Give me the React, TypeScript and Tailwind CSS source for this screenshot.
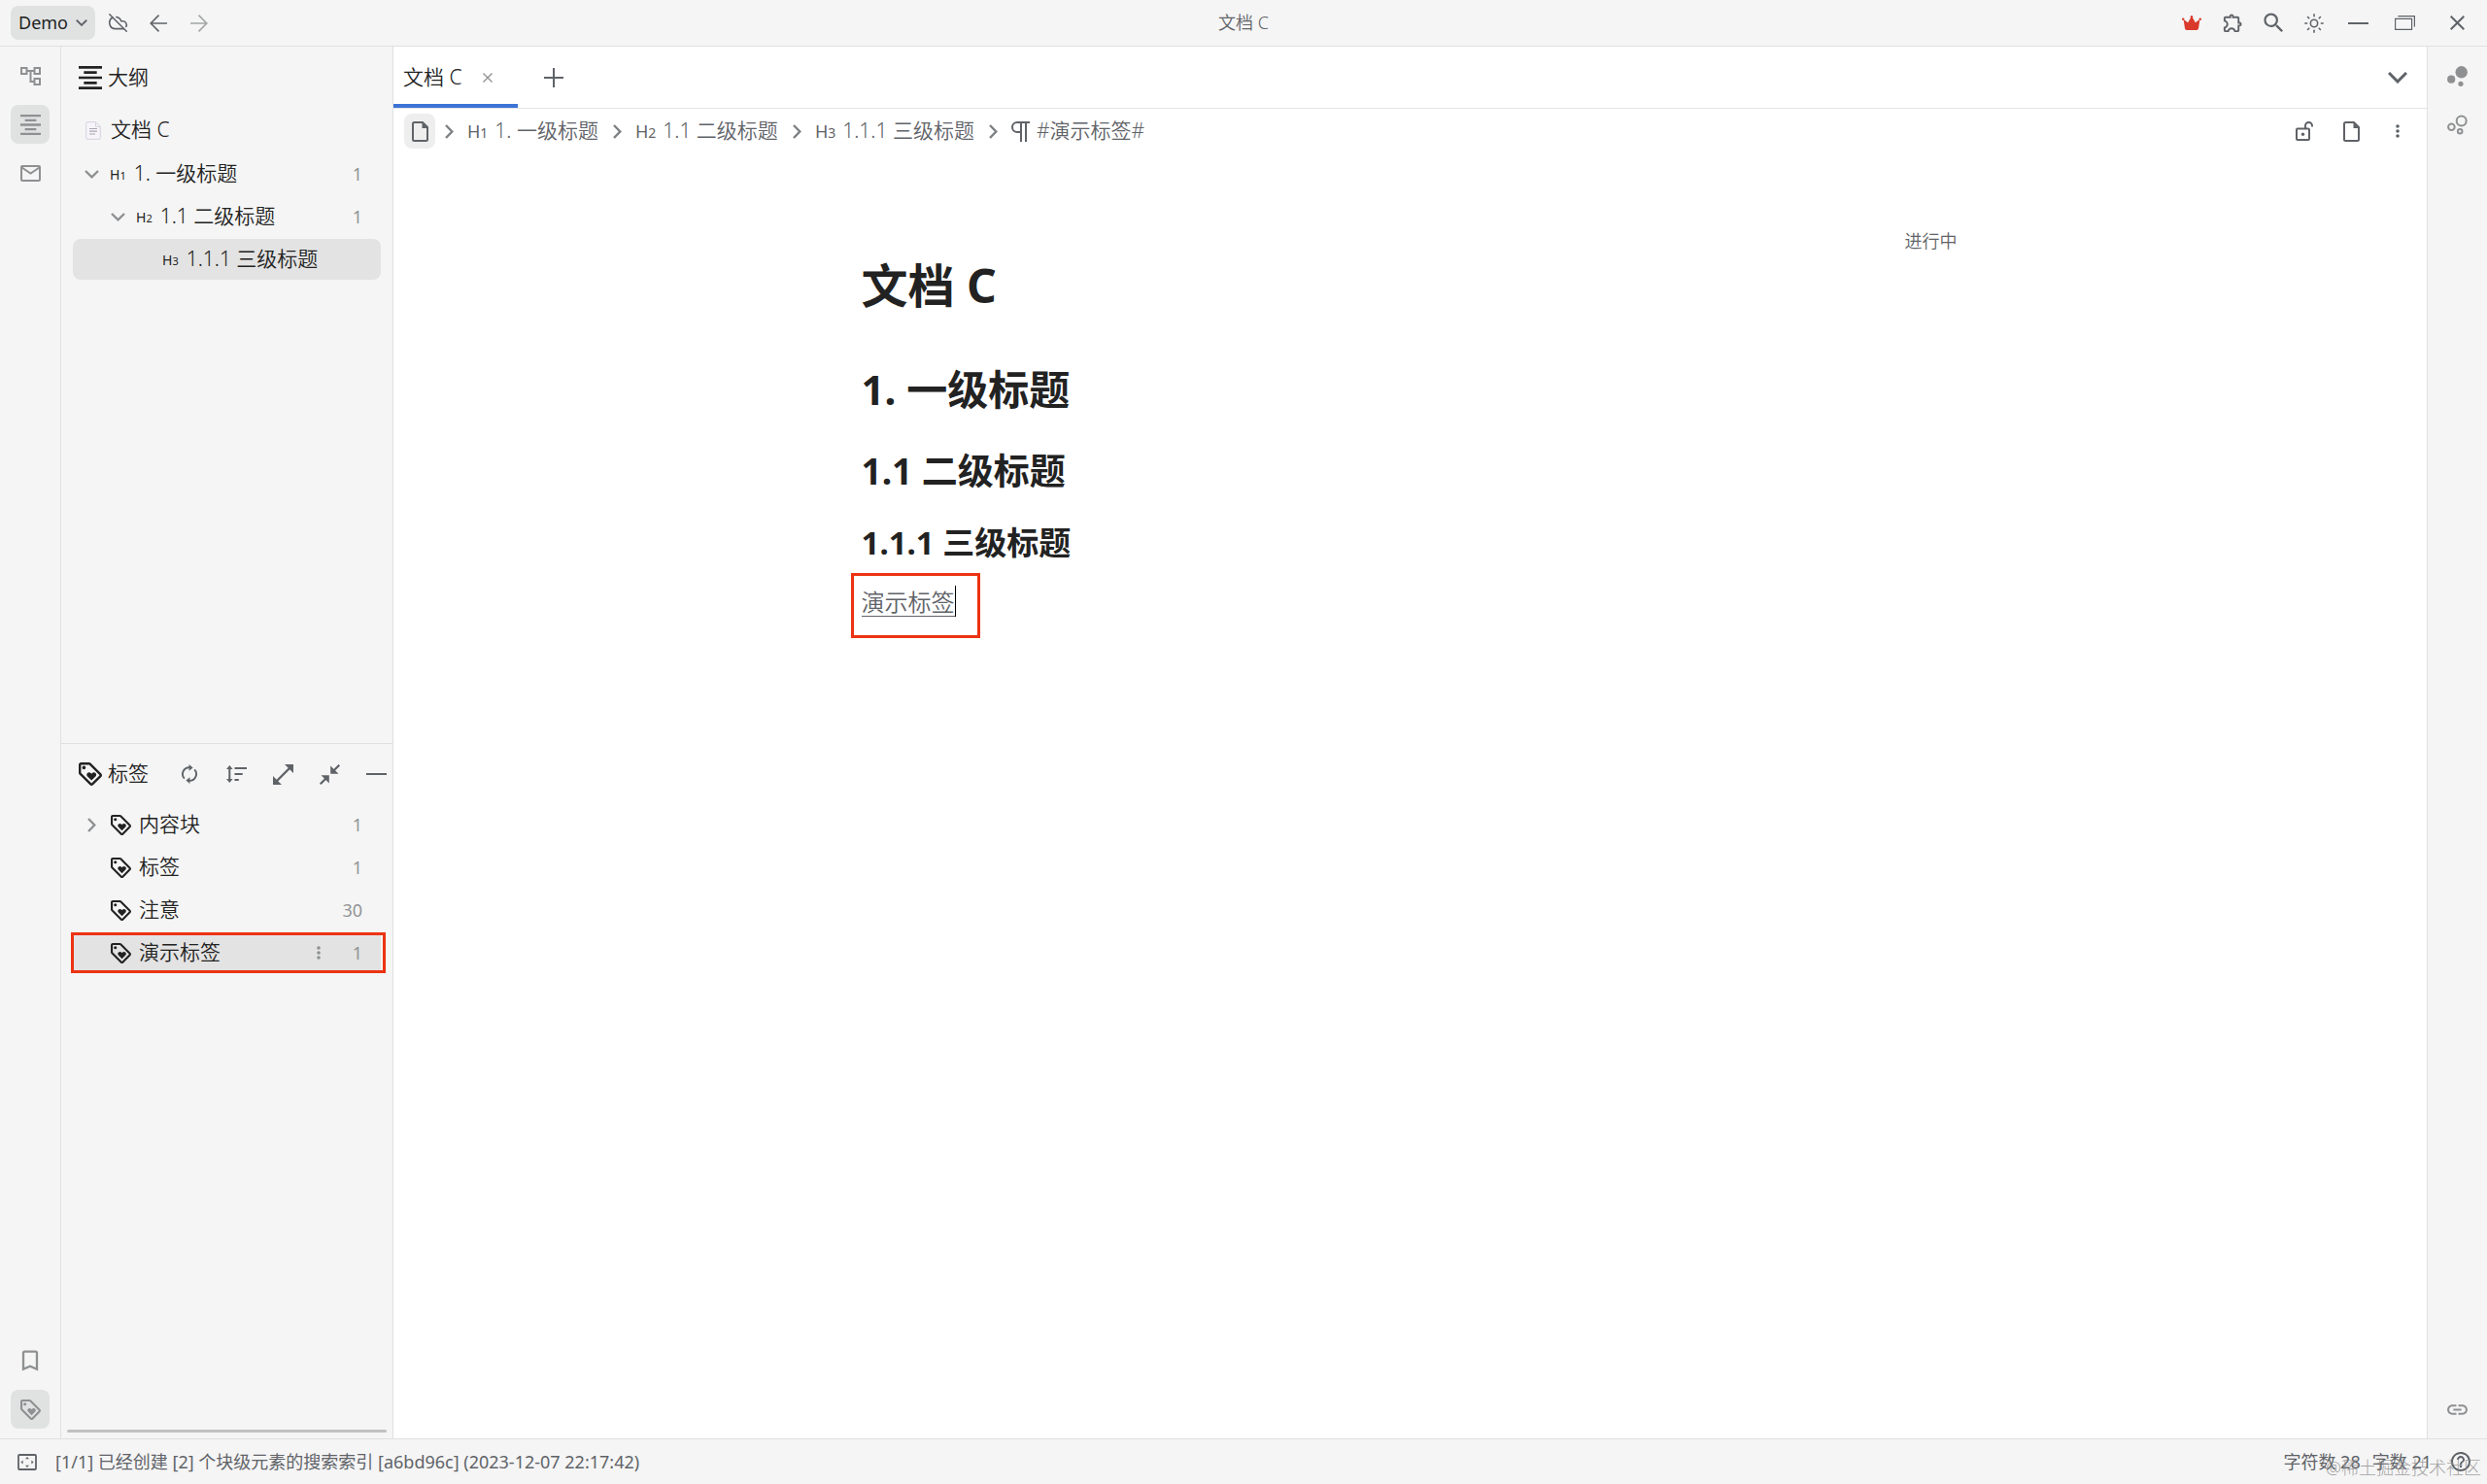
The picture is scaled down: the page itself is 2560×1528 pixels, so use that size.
import { MdBookmarkBorder, MdHelpOutline, MdLink, MdOutlineExtension, MdSearch } from "react-icons/md";
import { CloudOff, Sun } from "lucide-react";
import clsx from "clsx";

type IconProps = {
  className?: string;
};

const AlignIcon: React.FC<IconProps> = ({ className }) => (
  <svg viewBox="0 0 18 18" className={className} fill="currentColor">
    <path d="M0 0h18v2H0zM4 4h10v2H4zM0 8h18v2H0zM4 12h10v2H4zM0 16h18v2H0z" />
  </svg>
);

const TagIcon: React.FC<IconProps> = ({ className }) => (
  <svg viewBox="2 2 20 20" className={className} fill="currentColor">
    <path d="M21.41 11.58l-9-9C12.05 2.22 11.55 2 11 2H4c-1.1 0-2 .9-2 2v7c0 .55.22 1.05.59 1.42l9 9c.36.36.86.58 1.41.58s1.05-.22 1.41-.59l7-7c.37-.36.59-.86.59-1.41s-.23-1.06-.59-1.42zM13 20.01L4 11V4h7v-.01l9 9-7 7.02z" />
    <circle cx="6.5" cy="6.5" r="1.5" />
    <path d="M8.9 12.55c0 .57.23 1.07.6 1.45l3.5 3.5 3.5-3.5c.37-.37.6-.89.6-1.45 0-1.13-.92-2.05-2.05-2.05-.57 0-1.08.23-1.45.6l-.6.6-.6-.59c-.37-.38-.89-.61-1.45-.61-1.13 0-2.05.92-2.05 2.05z" />
  </svg>
);

const TreeIcon: React.FC<IconProps> = ({ className }) => (
  <svg viewBox="0 0 21 21" className={className} fill="none" stroke="currentColor" strokeWidth="2">
    <path d="M1 2h5.5v6H1zM14.5 2H20v6h-5.5zM14.5 13H20v6h-5.5zM6.5 5h8M10.5 5v11h4" />
  </svg>
);

const MailIcon: React.FC<IconProps> = ({ className }) => (
  <svg viewBox="0 0 21 17" className={className} fill="none" stroke="currentColor" strokeWidth="2">
    <rect x="1" y="1" width="19" height="15" rx="1" />
    <path d="M1.5 2.5l9 6 9-6" />
  </svg>
);

const FileIcon: React.FC<IconProps> = ({ className }) => (
  <svg viewBox="0 0 17 21" className={className} fill="none" stroke="currentColor" strokeWidth="2">
    <path d="M2.5 1H11l5 5v12.5a1.5 1.5 0 0 1-1.5 1.5h-12A1.5 1.5 0 0 1 1 18.5v-16A1.5 1.5 0 0 1 2.5 1z" />
    <path d="M10.5 1v6H16z" fill="currentColor" stroke="none" />
  </svg>
);

const PageIcon: React.FC<IconProps> = ({ className }) => (
  <svg viewBox="0 0 16 19" className={className} fill="none">
    <path d="M2 .7h8.5l4.8 4.8V17a1.3 1.3 0 0 1-1.3 1.3H2A1.3 1.3 0 0 1 .7 17V2A1.3 1.3 0 0 1 2 .7z" fill="#f7f5fa" stroke="#d5d2dc" />
    <path d="M10.5.7v4.8h4.8" stroke="#d5d2dc" />
    <path d="M4 7.5h8M4 10.2h8M4 13h6" stroke="#a9a6b2" strokeWidth="1.2" />
  </svg>
);

const ChevronRight: React.FC<IconProps> = ({ className }) => (
  <svg viewBox="0 0 9 15" className={className} fill="none" stroke="currentColor" strokeWidth="2.4">
    <path d="M1 1l6.3 6.5L1 14" />
  </svg>
);

const ChevronDown: React.FC<IconProps> = ({ className }) => (
  <svg viewBox="0 0 15 9" className={className} fill="none" stroke="currentColor" strokeWidth="2.4">
    <path d="M1 1l6.5 6.3L14 1" />
  </svg>
);

const DotsIcon: React.FC<IconProps> = ({ className }) => (
  <svg viewBox="0 0 4 14" className={className} fill="currentColor">
    <circle cx="2" cy="2" r="1.8" />
    <circle cx="2" cy="7" r="1.8" />
    <circle cx="2" cy="12" r="1.8" />
  </svg>
);

const ArrowIcon: React.FC<IconProps> = ({ className }) => (
  <svg viewBox="0 0 18 18" className={className} fill="none" stroke="currentColor" strokeWidth="1.6">
    <path d="M9.5.6L1.2 9l8.3 8.4M1.2 9H18" />
  </svg>
);

const CrownIcon: React.FC<IconProps> = ({ className }) => (
  <svg viewBox="0 0 20 15" className={className} fill="currentColor">
    <path d="M1.6 4l4.6 3.2L9.4 1.6h1.2l3.2 5.6L18.4 4 17 13.2A2 2 0 0 1 15 15H5a2 2 0 0 1-2-1.8z" />
    <circle cx="1.2" cy="3.8" r="1.2" />
    <circle cx="10" cy="1.2" r="1.2" />
    <circle cx="18.8" cy="3.8" r="1.2" />
  </svg>
);

const RestoreIcon: React.FC<IconProps> = ({ className }) => (
  <svg viewBox="0 0 21 15" className={className} fill="none" stroke="currentColor" strokeWidth="1.2">
    <path d="M.6 3.4h17v11H.6zM3.4.6h17v11" />
  </svg>
);

const CloseIcon: React.FC<IconProps> = ({ className }) => (
  <svg viewBox="0 0 15 15" className={className} fill="none" stroke="currentColor" strokeWidth="2">
    <path d="M.7.7l13.6 13.6M14.3.7L.7 14.3" />
  </svg>
);

const MinusIcon: React.FC<IconProps> = ({ className }) => (
  <svg viewBox="0 0 21 2" className={className} fill="currentColor">
    <path d="M0 0h21v2H0z" />
  </svg>
);

const PlusIcon: React.FC<IconProps> = ({ className }) => (
  <svg viewBox="0 0 20 20" className={className} fill="none" stroke="currentColor" strokeWidth="2">
    <path d="M10 0v20M0 10h20" />
  </svg>
);

const UnlockIcon: React.FC<IconProps> = ({ className }) => (
  <svg viewBox="0 0 18 20" className={className} fill="none" stroke="currentColor" strokeWidth="2">
    <rect x="1" y="7.5" width="13" height="11.5" rx="1" />
    <path d="M10 7.5V4.4a3.5 3.5 0 0 1 7 0v1" />
    <circle cx="7.5" cy="13.2" r="1.7" fill="currentColor" stroke="none" />
  </svg>
);

const BubblesIcon: React.FC<IconProps> = ({ className }) => (
  <svg viewBox="0 0 21 21" className={className} fill="currentColor">
    <circle cx="14.7" cy="6.3" r="6.2" />
    <circle cx="4.2" cy="13.7" r="4.1" />
    <circle cx="14" cy="18.3" r="2.6" />
  </svg>
);

const BubblesOutlineIcon: React.FC<IconProps> = ({ className }) => (
  <svg viewBox="0 0 21 21" className={className} fill="none" stroke="currentColor" strokeWidth="2">
    <circle cx="14.7" cy="6.5" r="5" />
    <circle cx="4.4" cy="12.8" r="3.3" />
    <circle cx="13.2" cy="17.3" r="2.3" />
  </svg>
);

const RefreshIcon: React.FC<IconProps> = ({ className }) => (
  <svg viewBox="0 0 16 20" className={className} fill="none" stroke="currentColor" strokeWidth="1.9">
    <path d="M2.8 14.6A6.8 6.8 0 0 1 8 3.2M13.2 5.4A6.8 6.8 0 0 1 8 16.8" />
    <path d="M7.6 0l4 3.4-4 3.4zM8.4 13.2l-4 3.4 4 3.4z" fill="currentColor" stroke="none" />
  </svg>
);

const SortIcon: React.FC<IconProps> = ({ className }) => (
  <svg viewBox="0 0 21 18" className={className} fill="none" stroke="currentColor" strokeWidth="2">
    <path d="M8.5 3H21M8.5 9h8.2M8.5 15h4.3M3.3 3v12" />
    <path d="M3.3 0l3.3 4H0zM3.3 18L0 14h6.6z" fill="currentColor" stroke="none" />
  </svg>
);

const ExpandIcon: React.FC<IconProps> = ({ className }) => (
  <svg viewBox="0 0 21 21" className={className} fill="currentColor">
    <path d="M12 0h9v9zM0 12v9h9z" />
    <path d="M4 17L17 4" stroke="currentColor" strokeWidth="2.4" />
  </svg>
);

const CollapseIcon: React.FC<IconProps> = ({ className }) => (
  <svg viewBox="0 0 21 21" className={className} fill="currentColor">
    <path d="M11.2 1.5v8.3h8.3zM1.5 11.2h8.3v8.3z" />
    <path d="M13 8l7.3-7.3M8 13L.7 20.3" stroke="currentColor" strokeWidth="2.2" />
  </svg>
);

const PilcrowIcon: React.FC<IconProps> = ({ className }) => (
  <svg viewBox="0 0 19 21" className={className} fill="none" stroke="currentColor" strokeWidth="2">
    <path d="M19 1H6a4.8 4.8 0 0 0 0 10h3M10 1v20M15 1v20" />
  </svg>
);

const DockIcon: React.FC<IconProps> = ({ className }) => (
  <svg viewBox="0 0 20 17" className={className} fill="none" stroke="currentColor" strokeWidth="1.8">
    <rect x="1" y="1" width="18" height="15" rx="1" />
    <path d="M10 3l2 2.2H8zM10 14l2-2.2H8zM3.4 8.5l2.2-2v4zM16.6 8.5l-2.2-2v4z" fill="currentColor" stroke="none" />
  </svg>
);

type ButtonProps = {
  label: string;
  className?: string;
  children: React.ReactNode;
};

const IconButton: React.FC<ButtonProps> = ({ label, className, children }) => (
  <button aria-label={label} className={clsx("flex shrink-0 items-center justify-center", className)}>
    {children}
  </button>
);

const DockButton: React.FC<ButtonProps & { active?: boolean }> = ({ label, active, children }) => (
  <button
    aria-label={label}
    className={clsx("flex size-10 items-center justify-center rounded-lg text-[#8e9092]", active && "bg-[#e0e2e2]")}
  >
    {children}
  </button>
);

const Level: React.FC<{ n: number; small?: boolean }> = ({ n, small }) => (
  <span className={clsx("flex items-baseline font-normal", small ? "text-[14px]" : "text-[18px]")}>
    H<span className={small ? "text-[11px]" : "text-[14px]"}>{n}</span>
  </span>
);

const outline = [
  { level: 1, text: "1. 一级标题", count: 1, indent: "pl-3" },
  { level: 2, text: "1.1 二级标题", count: 1, indent: "pl-[39px]" },
  { level: 3, text: "1.1.1 三级标题", count: 0, indent: "pl-[66px]" },
];

const tags = [
  { text: "内容块", count: 1, open: true, active: false },
  { text: "标签", count: 1, open: false, active: false },
  { text: "注意", count: 30, open: false, active: false },
  { text: "演示标签", count: 1, open: false, active: true },
];

const crumbs = [
  { level: 1, text: "1. 一级标题" },
  { level: 2, text: "1.1 二级标题" },
  { level: 3, text: "1.1.1 三级标题" },
];

const TopBar = () => (
  <header className="grid h-12 shrink-0 grid-cols-[1fr_auto_1fr] items-center border-b border-[#dfe0e1] text-[18px] text-[#5f6368]">
    <div className="flex h-full items-center pl-[11px]">
      <button className="mr-[2px] flex h-[35px] items-center gap-2 rounded-lg bg-[#e0e2e2] px-2 font-normal text-[#222]">
        Demo
        <ChevronDown className="w-3 text-[#5f6368]" />
      </button>
      <IconButton label="云端同步" className="h-full w-[42px]">
        <CloudOff size={21} strokeWidth={1.8} />
      </IconButton>
      <IconButton label="后退" className="h-full w-[42px]">
        <ArrowIcon className="w-[18px]" />
      </IconButton>
      <IconButton label="前进" className="h-full w-[42px] text-[#a3a5a7]">
        <ArrowIcon className="w-[18px] rotate-180" />
      </IconButton>
    </div>
    <div>文档 C</div>
    <div className="flex h-full justify-end">
      <IconButton label="会员" className="w-[42px] text-[#d93a2b]">
        <CrownIcon className="w-5" />
      </IconButton>
      <IconButton label="插件" className="w-[42px]">
        <MdOutlineExtension size={23} />
      </IconButton>
      <IconButton label="搜索" className="w-[42px]">
        <MdSearch size={27} />
      </IconButton>
      <IconButton label="外观" className="w-[42px]">
        <Sun size={22} strokeWidth={1.7} />
      </IconButton>
      <IconButton label="最小化" className="w-12">
        <MinusIcon className="w-[21px]" />
      </IconButton>
      <IconButton label="还原" className="w-12">
        <RestoreIcon className="w-[21px]" />
      </IconButton>
      <IconButton label="关闭" className="w-[61px]">
        <CloseIcon className="w-[15px]" />
      </IconButton>
    </div>
  </header>
);

const LeftDock = () => (
  <nav className="flex w-[63px] shrink-0 flex-col items-center gap-[10px] border-r border-[#dfe0e1] py-[10px]">
    <DockButton label="文档树">
      <TreeIcon className="w-[21px]" />
    </DockButton>
    <DockButton label="大纲" active>
      <AlignIcon className="w-[21px]" />
    </DockButton>
    <DockButton label="收集箱">
      <MailIcon className="w-[21px]" />
    </DockButton>
    <div className="flex-1" />
    <DockButton label="书签">
      <MdBookmarkBorder size={28} />
    </DockButton>
    <DockButton label="标签" active>
      <TagIcon className="w-[21px]" />
    </DockButton>
  </nav>
);

const Sidebar = () => (
  <aside className="flex w-[342px] shrink-0 flex-col border-r border-[#dfe0e1] text-[21px] text-[#222]">
    <section className="h-[717px] shrink-0">
      <h2 className="flex h-16 items-center gap-[6px] pl-[18px] font-[350]">
        <AlignIcon className="w-6" />
        大纲
      </h2>
      <ul className="flex flex-col gap-[2px] px-3">
        <li className="flex h-11 items-center gap-[10px] pl-[13px]">
          <PageIcon className="w-4" />
          文档 C
        </li>
        {outline.map((item) => (
          <li
            key={item.level}
            className={clsx("flex h-[42px] items-center rounded-lg pr-[19px]", item.indent, item.level === 3 && "bg-[#e3e3e3]")}
          >
            <span className="w-[26px] shrink-0">
              {item.count > 0 && <ChevronDown className="w-[15px] text-[#8e9092]" />}
            </span>
            <Level n={item.level} small />
            <span className="ml-2 flex-1">{item.text}</span>
            {item.count > 0 && <span className="text-[18px] font-normal text-[#929496]">{item.count}</span>}
          </li>
        ))}
      </ul>
    </section>
    <section className="flex min-h-0 flex-1 flex-col border-t border-[#dfe0e1]">
      <div className="flex h-[62px] shrink-0 items-center pl-[18px]">
        <h2 className="flex items-center gap-[6px] font-[350]">
          <TagIcon className="w-6" />
          标签
        </h2>
        <div className="ml-7 flex gap-5 text-[#5f6368]">
          <IconButton label="刷新" className="h-8 w-7">
            <RefreshIcon className="w-4" />
          </IconButton>
          <IconButton label="排序" className="h-8 w-7">
            <SortIcon className="w-[21px]" />
          </IconButton>
          <IconButton label="展开" className="h-8 w-7">
            <ExpandIcon className="w-[21px]" />
          </IconButton>
          <IconButton label="折叠" className="h-8 w-7">
            <CollapseIcon className="w-[21px]" />
          </IconButton>
          <IconButton label="最小化" className="h-8 w-7">
            <MinusIcon className="w-[21px]" />
          </IconButton>
        </div>
      </div>
      <ul className="flex flex-1 flex-col gap-[2px] px-3">
        {tags.map((tag) => (
          <li
            key={tag.text}
            className={clsx("relative flex h-[42px] items-center pr-[19px] pl-[15px]", tag.active && "bg-[#e3e3e3]")}
          >
            <span className="w-6 shrink-0">{tag.open && <ChevronRight className="w-[9px] text-[#8e9092]" />}</span>
            <TagIcon className="w-[21px]" />
            <span className="ml-2 flex-1">{tag.text}</span>
            {tag.active && <DotsIcon className="mr-[33px] h-[14px] text-[#8e9092]" />}
            <span className="text-[18px] font-normal text-[#929496]">{tag.count}</span>
            {tag.active && <span className="absolute inset-y-0 -right-[5px] -left-[2px] border-3 border-[#ec3313]" />}
          </li>
        ))}
      </ul>
      <div className="mx-[6px] mb-[6px] h-[3px] rounded-full bg-[#c1c1c1]" />
    </section>
  </aside>
);

const Editor = () => (
  <main className="flex min-w-0 flex-1 flex-col bg-white text-[#222]">
    <div className="flex h-16 shrink-0 items-stretch border-b border-[#e3e4e5] text-[21px]">
      <div className="flex w-32 items-center justify-between border-b-4 border-[#3c73d6] pt-1 pr-[26px] pl-[10px]">
        <span>文档 C</span>
        <IconButton label="关闭页签" className="text-[#8e9092]">
          <CloseIcon className="w-[10px]" />
        </IconButton>
      </div>
      <IconButton label="新建" className="w-[74px] text-[#5f6368]">
        <PlusIcon className="w-5" />
      </IconButton>
      <IconButton label="更多页签" className="mr-[6px] ml-auto w-12 text-[#5f6368]">
        <svg viewBox="0 0 20 12" className="w-5" fill="none" stroke="currentColor" strokeWidth="3">
          <path d="M1 1l9 9 9-9" />
        </svg>
      </IconButton>
    </div>
    <div className="flex h-[46px] shrink-0 items-center pl-[11px] text-[21px] text-[#5f6368]">
      <IconButton label="文档" className="h-9 w-8 rounded-lg bg-[#eeeeee]">
        <FileIcon className="w-[17px]" />
      </IconButton>
      {crumbs.map((crumb) => (
        <div key={crumb.level} className="flex items-center">
          <ChevronRight className={clsx("mr-[14px] w-[9px] text-[#7d8083]", crumb.level === 1 ? "ml-[10px]" : "ml-[15px]")} />
          <a href="#" className="flex items-center gap-[7px]">
            <Level n={crumb.level} />
            {crumb.text}
          </a>
        </div>
      ))}
      <ChevronRight className="mr-[14px] ml-[15px] w-[9px] text-[#7d8083]" />
      <a href="#" className="flex items-center gap-[7px]">
        <PilcrowIcon className="w-[19px]" />
        #演示标签#
      </a>
      <div className="mr-[6px] ml-auto flex">
        <IconButton label="解锁" className="h-9 w-12">
          <UnlockIcon className="w-[18px]" />
        </IconButton>
        <IconButton label="打开文档" className="h-9 w-12">
          <FileIcon className="w-[17px]" />
        </IconButton>
        <IconButton label="更多" className="h-9 w-12">
          <DotsIcon className="h-[14px]" />
        </IconButton>
      </div>
    </div>
    <article className="mx-auto w-full max-w-[1130px] pt-[76px]">
      <div className="pr-[2px] text-right text-[18px] leading-7 text-[#5f6368]">进行中</div>
      <h1 className="text-[48px] leading-[64px] font-bold">文档 C</h1>
      <h2 className="mt-[47px] text-[42px] leading-[56px] font-bold">1. 一级标题</h2>
      <h3 className="mt-8 text-[37px] leading-[48px] font-bold">1.1 二级标题</h3>
      <h4 className="mt-7 text-[33px] leading-[44px] font-bold">1.1.1 三级标题</h4>
      <p className="relative mt-[22px] flex w-fit text-[24px] text-[#5f6368]">
        <span className="h-8 border-b border-[#5f6368] leading-[34px]">演示标签</span>
        <span className="h-8 w-px bg-black" />
        <span className="absolute -top-[13px] -right-[25px] h-[67px] w-[133px] border-3 border-[#ec3313]" />
      </p>
    </article>
  </main>
);

const RightDock = () => (
  <nav className="flex w-[62px] shrink-0 flex-col items-center gap-[10px] border-l border-[#dfe0e1] py-[10px]">
    <DockButton label="关系图">
      <BubblesIcon className="w-[21px]" />
    </DockButton>
    <DockButton label="全局关系图">
      <BubblesOutlineIcon className="w-[21px]" />
    </DockButton>
    <div className="flex-1" />
    <DockButton label="反向链接">
      <MdLink size={25} />
    </DockButton>
  </nav>
);

const StatusBar = () => (
  <footer className="relative flex h-[47px] shrink-0 items-center border-t border-[#dfe0e1] pr-[15px] pl-[18px] text-[18px] font-normal text-[#5f6368]">
    <IconButton label="停靠栏" className="mr-[19px]">
      <DockIcon className="w-5" />
    </IconButton>
    <span>[1/1] 已经创建 [2] 个块级元素的搜索索引 [a6bd96c] (2023-12-07 22:17:42)</span>
    <span className="ml-auto">字符数 28</span>
    <span className="ml-3">字数 21</span>
    <IconButton label="帮助" className="ml-[18px]">
      <MdHelpOutline size={24} />
    </IconButton>
    <span className="absolute right-[6px] bottom-[3px] leading-7 font-light text-[#8c8c8c]/80">@稀土掘金技术社区</span>
  </footer>
);

const App = () => {
  return (
    <div className="flex h-screen flex-col bg-[#f5f5f5] font-['Noto_Sans','Noto_Sans_CJK_SC',sans-serif] font-[350]">
      <TopBar />
      <div className="flex min-h-0 flex-1">
        <LeftDock />
        <Sidebar />
        <Editor />
        <RightDock />
      </div>
      <StatusBar />
    </div>
  );
};

export default App;
